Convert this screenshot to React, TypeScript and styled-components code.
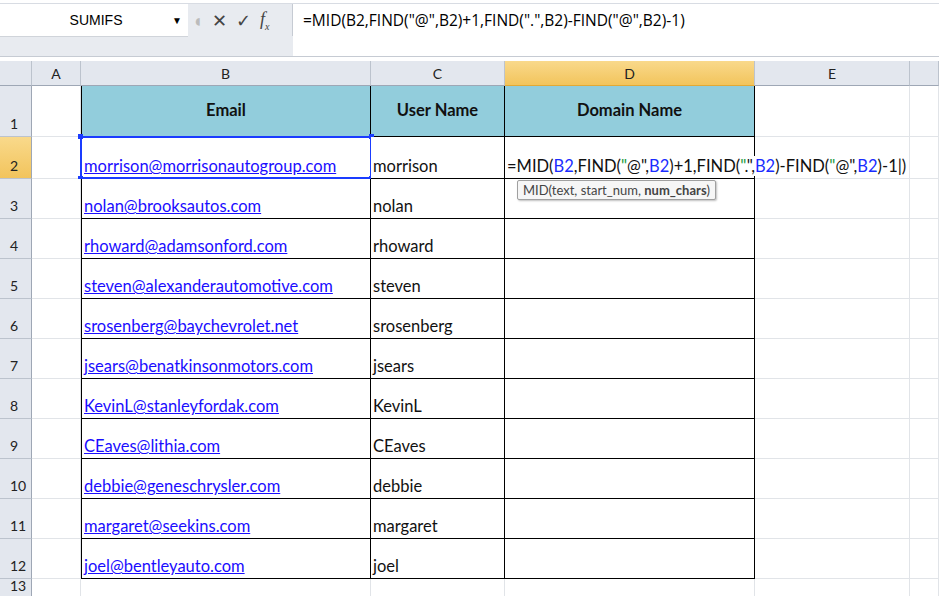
import styled, { createGlobalStyle } from 'styled-components';

const Global = createGlobalStyle`
  body { margin: 0; background: #fff; font-family: Lato, "Open Sans", sans-serif; }
`;

const COLS = '32px 49px 290px 134px 250px 155px 1fr';

const rows = [
  ['morrison@morrisonautogroup.com', 'morrison'],
  ['nolan@brooksautos.com', 'nolan'],
  ['rhoward@adamsonford.com', 'rhoward'],
  ['steven@alexanderautomotive.com', 'steven'],
  ['srosenberg@baychevrolet.net', 'srosenberg'],
  ['jsears@benatkinsonmotors.com', 'jsears'],
  ['KevinL@stanleyfordak.com', 'KevinL'],
  ['CEaves@lithia.com', 'CEaves'],
  ['debbie@geneschrysler.com', 'debbie'],
  ['margaret@seekins.com', 'margaret'],
  ['joel@bentleyauto.com', 'joel'],
];

const Page = styled.div`
  width: 939px;
  height: 596px;
  overflow: hidden;
  background: #fff;
`;

const FormulaBar = styled.div`
  display: flex;
  height: 52px;
  margin-top: 3px;
  border-top: 1px solid #d8dce3;
  border-bottom: 1px solid #c6cbd3;
  background: #e8ebf0;
`;

const NameBox = styled.div`
  width: 188px;
  height: 32px;
  display: flex;
  align-items: center;
  background: #fff;
  font-family: "Liberation Sans", sans-serif;
  font-size: 14px;
  border-bottom: 1px solid #d0d4da;
`;

const NameText = styled.span`
  flex: 1;
  text-align: center;
  padding-left: 20px;
`;

const Tools = styled.div`
  width: 100px;
  height: 32px;
  display: flex;
  align-items: center;
  gap: 9px;
  padding-left: 4px;
  border-right: 1px solid #c6cbd3;
  background: #e8ebf0;
  color: #444;
  font-size: 18px;
`;

const FormulaInput = styled.div`
  flex: 1;
  background: #fff;
  padding: 5px 10px;
  font-size: 15.5px;
  font-family: "Open Sans", sans-serif;
`;

const Grid = styled.div`
  display: grid;
  grid-template-columns: ${COLS};
  margin-top: 4px;
`;

const ColHead = styled.div<{ $active?: boolean }>`
  height: 24px;
  display: flex;
  align-items: center;
  justify-content: center;
  font-size: 14px;
  color: #222;
  background: ${p => (p.$active ? 'linear-gradient(#f9d98b,#f2c45c)' : '#e3e7ee')};
  border-right: 1px solid #bcc3cd;
  border-bottom: 1px solid ${p => (p.$active ? '#e2a935' : '#9ea7b5')};
`;

const RowHead = styled.div<{ $active?: boolean; $h?: number }>`
  height: ${p => p.$h ?? 40}px;
  display: flex;
  align-items: flex-end;
  padding: 0 0 4px 10px;
  box-sizing: border-box;
  font-size: 14px;
  color: #222;
  background: ${p => (p.$active ? 'linear-gradient(#f9d98b,#f2c45c)' : '#e3e7ee')};
  border-bottom: 1px solid #bcc3cd;
  border-right: 1px solid #9ea7b5;
`;

const Cell = styled.div<{ $h?: number; $table?: boolean; $head?: boolean }>`
  position: relative;
  height: ${p => p.$h ?? 40}px;
  box-sizing: border-box;
  display: flex;
  align-items: ${p => (p.$head ? 'center' : 'flex-end')};
  justify-content: ${p => (p.$head ? 'center' : 'flex-start')};
  padding: 0 2px 2px;
  font-size: 16.5px;
  font-weight: ${p => (p.$head ? 700 : 400)};
  color: #111;
  white-space: nowrap;
  background: ${p => (p.$head ? '#92cddc' : '#fff')};
  border-right: 1px solid ${p => (p.$table ? '#000' : '#e1e4e8')};
  border-bottom: 1px solid ${p => (p.$table ? '#000' : '#e1e4e8')};
`;

const Link = styled.span`
  color: #1a0dff;
  text-decoration: underline;
`;

const Selection = styled.div`
  position: absolute;
  inset: -1px -2px -1px -2px;
  border: 2px solid #1a3cff;
  pointer-events: none;
`;

const Handle = styled.div<{ $x: 'left' | 'right'; $y: 'top' | 'bottom' }>`
  position: absolute;
  ${p => p.$x}: -4px;
  ${p => p.$y}: -4px;
  width: 5px;
  height: 5px;
  background: #1a3cff;
`;

const Edit = styled.div`
  position: absolute;
  left: 2px;
  bottom: 2px;
  font-size: 16.5px;
  z-index: 2;
  background: #fff;
`;

const Blue = styled.span`color: #1a2cff;`;
const Green = styled.span`color: #1a9a3a;`;

const Tip = styled.div`
  position: absolute;
  left: 12px;
  top: 43px;
  z-index: 3;
  padding: 1px 5px;
  font-size: 13px;
  color: #444;
  background: #f6f6f6;
  border: 1px solid #a0a0a0;
  border-radius: 2px;
  box-shadow: 1px 1px 2px rgba(0,0,0,.25);
`;

export default function App() {
  return (
    <Page>
      <Global />
      <FormulaBar>
        <NameBox>
          <NameText>SUMIFS</NameText>
          <span style={{ fontSize: 10, paddingRight: 6 }}>▼</span>
        </NameBox>
        <Tools>
          <span style={{ color: '#bbb' }}>◖</span>
          <span>✕</span>
          <span>✓</span>
          <i style={{ fontFamily: '"Liberation Serif", serif' }}>f<sub style={{ fontSize: 10 }}>x</sub></i>
        </Tools>
        <FormulaInput>=MID(B2,FIND("@",B2)+1,FIND(".",B2)-FIND("@",B2)-1)</FormulaInput>
      </FormulaBar>
      <Grid>
        <ColHead />
        <ColHead>A</ColHead>
        <ColHead>B</ColHead>
        <ColHead>C</ColHead>
        <ColHead $active>D</ColHead>
        <ColHead>E</ColHead>
        <ColHead />

        <RowHead $h={51}>1</RowHead>
        <Cell $h={51} />
        <Cell $h={51} $table $head style={{ borderLeft: '1px solid #000' }}>Email</Cell>
        <Cell $h={51} $table $head>User Name</Cell>
        <Cell $h={51} $table $head>Domain Name</Cell>
        <Cell $h={51} />
        <Cell $h={51} />

        {rows.map(([email, user], i) => {
          const h = i === 0 ? 42 : 40;
          return (
            <>
              <RowHead key={'r' + i} $active={i === 0} $h={h}>{i + 2}</RowHead>
              <Cell $h={h} />
              <Cell $h={h} $table style={{ borderLeft: '1px solid #000' }}>
                <Link>{email}</Link>
                {i === 0 && (
                  <Selection>
                    <Handle $x="left" $y="top" />
                    <Handle $x="right" $y="top" />
                    <Handle $x="left" $y="bottom" />
                    <Handle $x="right" $y="bottom" />
                  </Selection>
                )}
              </Cell>
              <Cell $h={h} $table>{user}</Cell>
              <Cell $h={h} $table>
                {i === 0 && (
                  <>
                    <Edit>
                      =MID(<Blue>B2</Blue>,FIND(<Green>"</Green>@",<Blue>B2</Blue>)+1,FIND(<Green>"</Green>.",<Blue>B2</Blue>)-FIND(<Green>"</Green>@",<Blue>B2</Blue>)-1|)
                    </Edit>
                    <Tip>MID(text, start_num, <b>num_chars</b>)</Tip>
                  </>
                )}
              </Cell>
              <Cell $h={h} />
              <Cell $h={h} />
            </>
          );
        })}
        <RowHead $h={20}>13</RowHead>
        <Cell $h={20} />
        <Cell $h={20} />
        <Cell $h={20} />
        <Cell $h={20} />
        <Cell $h={20} />
        <Cell $h={20} />
      </Grid>
    </Page>
  );
}
